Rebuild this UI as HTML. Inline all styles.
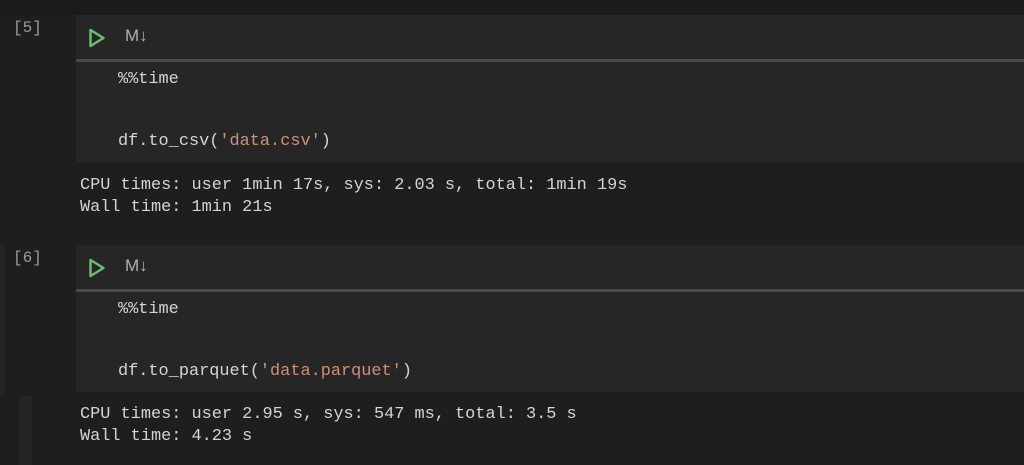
<!DOCTYPE html>
<html><head><style>
body{margin:0;width:1024px;height:465px;background:#1e1e1e;position:relative;overflow:hidden;font-family:"Liberation Mono",monospace;font-size:16.9px;color:#d4d4d4}
.a{position:absolute}
.ed{position:absolute;left:76px;width:948px;height:147px;background:#262626}
.line{position:absolute;left:0;right:0;top:44px;height:3px;background:#4a4a4a}
.t{position:absolute;white-space:pre;line-height:20px}
.n{color:#9a9a9a;font-size:16px}
.s{color:#ce9178}
.m{position:absolute;left:49px;top:11px;font-family:"Liberation Sans",sans-serif;font-size:17px;color:#b0b0b0}
</style></head><body>
<div class="a" style="left:0;top:0;width:1024px;height:15px;background:#1b1b1b"></div>
<div class="a" style="left:0;top:245px;width:5px;height:150px;background:#242424"></div>
<div class="a" style="left:19px;top:396px;width:13px;height:69px;background:#242424"></div>

<div class="t n" style="left:13px;top:18px">[5]</div>
<div class="ed" style="top:15px">
 <svg class="a" style="left:12px;top:13px" width="18" height="20" viewBox="0 0 18 20"><path d="M2.5 2 L15.5 10 L2.5 18 Z" fill="none" stroke="#6cc070" stroke-width="2.4" stroke-linejoin="round"/></svg>
 <div class="m">M↓</div>
 <div class="line"></div>
 <div class="t" style="left:42px;top:55px">%%time</div>
 <div class="t" style="left:42px;top:117px">df.to_csv(<span class="s">'data.csv'</span>)</div>
</div>
<div class="t" style="left:80px;top:176px">CPU times: user 1min 17s, sys: 2.03 s, total: 1min 19s</div>
<div class="t" style="left:80px;top:198px">Wall time: 1min 21s</div>

<div class="t n" style="left:13px;top:248px">[6]</div>
<div class="ed" style="top:245px">
 <svg class="a" style="left:12px;top:13px" width="18" height="20" viewBox="0 0 18 20"><path d="M2.5 2 L15.5 10 L2.5 18 Z" fill="none" stroke="#6cc070" stroke-width="2.4" stroke-linejoin="round"/></svg>
 <div class="m">M↓</div>
 <div class="line"></div>
 <div class="t" style="left:42px;top:55px">%%time</div>
 <div class="t" style="left:42px;top:117px">df.to_parquet(<span class="s">'data.parquet'</span>)</div>
</div>
<div class="t" style="left:80px;top:405px">CPU times: user 2.95 s, sys: 547 ms, total: 3.5 s</div>
<div class="t" style="left:80px;top:427px">Wall time: 4.23 s</div>
</body></html>
